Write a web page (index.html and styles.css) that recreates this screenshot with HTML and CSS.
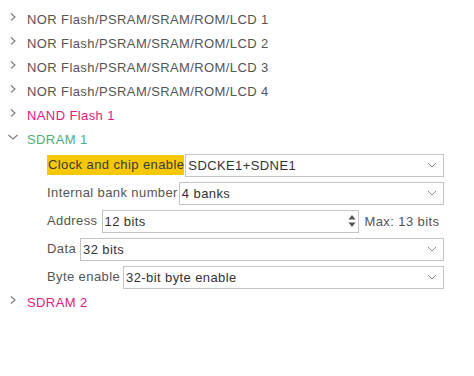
FILE: index.html
```html
<!DOCTYPE html>
<html>
<head>
<meta charset="utf-8">
<link rel="stylesheet" href="styles.css">
</head>
<body>
<div class="tree">
  <div class="node">
    <svg class="chev" width="10" height="10" viewBox="0 0 10 10"><path d="M3 1.5 L7 5 L3 8.5" fill="none" stroke="#7a7a7a" stroke-width="1.1"/></svg>
    <span class="name">NOR Flash/PSRAM/SRAM/ROM/LCD 1</span>
  </div>
  <div class="node">
    <svg class="chev" width="10" height="10" viewBox="0 0 10 10"><path d="M3 1.5 L7 5 L3 8.5" fill="none" stroke="#7a7a7a" stroke-width="1.1"/></svg>
    <span class="name">NOR Flash/PSRAM/SRAM/ROM/LCD 2</span>
  </div>
  <div class="node">
    <svg class="chev" width="10" height="10" viewBox="0 0 10 10"><path d="M3 1.5 L7 5 L3 8.5" fill="none" stroke="#7a7a7a" stroke-width="1.1"/></svg>
    <span class="name">NOR Flash/PSRAM/SRAM/ROM/LCD 3</span>
  </div>
  <div class="node">
    <svg class="chev" width="10" height="10" viewBox="0 0 10 10"><path d="M3 1.5 L7 5 L3 8.5" fill="none" stroke="#7a7a7a" stroke-width="1.1"/></svg>
    <span class="name">NOR Flash/PSRAM/SRAM/ROM/LCD 4</span>
  </div>
  <div class="node">
    <svg class="chev" width="10" height="10" viewBox="0 0 10 10"><path d="M3 1.5 L7 5 L3 8.5" fill="none" stroke="#7a7a7a" stroke-width="1.1"/></svg>
    <span class="name pink">NAND Flash 1</span>
  </div>
  <div class="node">
    <svg class="chev" width="10" height="10" viewBox="0 0 10 10"><path d="M0.5 3 L5 7 L9.5 3" fill="none" stroke="#7a7a7a" stroke-width="1.1"/></svg>
    <span class="name green">SDRAM 1</span>
  </div>
  <div class="form">
    <div class="row">
      <span class="label hl">Clock and chip enable</span>
      <div class="select"><span class="val">SDCKE1+SDNE1</span><svg class="dd" width="10" height="6" viewBox="0 0 10 6"><path d="M1 1 L5 5 L9 1" fill="none" stroke="#8a8a8a" stroke-width="1"/></svg></div>
    </div>
    <div class="row tight">
      <span class="label">Internal bank number</span>
      <div class="select"><span class="val">4 banks</span><svg class="dd" width="10" height="6" viewBox="0 0 10 6"><path d="M1 1 L5 5 L9 1" fill="none" stroke="#8a8a8a" stroke-width="1"/></svg></div>
    </div>
    <div class="row wide">
      <span class="label">Address</span>
      <div class="spin"><span class="val">12 bits</span><svg class="arrows" width="10" height="16" viewBox="0 0 10 16"><path d="M1.5 6.5 L5 2 L8.5 6.5 Z" fill="#555"/><path d="M1.5 9.5 L5 14 L8.5 9.5 Z" fill="#555"/></svg></div>
      <span class="max">Max: 13 bits</span>
    </div>
    <div class="row wide">
      <span class="label">Data</span>
      <div class="select"><span class="val">32 bits</span><svg class="dd" width="10" height="6" viewBox="0 0 10 6"><path d="M1 1 L5 5 L9 1" fill="none" stroke="#8a8a8a" stroke-width="1"/></svg></div>
    </div>
    <div class="row">
      <span class="label">Byte enable</span>
      <div class="select"><span class="val">32-bit byte enable</span><svg class="dd" width="10" height="6" viewBox="0 0 10 6"><path d="M1 1 L5 5 L9 1" fill="none" stroke="#8a8a8a" stroke-width="1"/></svg></div>
    </div>
  </div>
  <div class="node">
    <svg class="chev" width="10" height="10" viewBox="0 0 10 10"><path d="M3 1.5 L7 5 L3 8.5" fill="none" stroke="#7a7a7a" stroke-width="1.1"/></svg>
    <span class="name pink">SDRAM 2</span>
  </div>
</div>
</body>
</html>
```

FILE: styles.css
```css
html, body {
  margin: 0;
  padding: 0;
  background: #ffffff;
}
body {
  font-family: "Liberation Sans", Arial, sans-serif;
  font-size: 13px;
  letter-spacing: 0.4px;
  color: #555555;
}
.tree {
  padding-top: 8px;
  width: 474px;
}
.node {
  height: 24px;
  display: flex;
  align-items: center;
  padding-left: 8px;
}
.chev {
  width: 10px;
  height: 10px;
  margin-right: 9px;
  position: relative;
  top: -3px;
  flex: none;
}
.name {
  line-height: 16px;
}
.pink { color: #e0207f; }
.green { color: #4fae77; }
.form {
  margin-top: -1px;
  padding-left: 47px;
  width: 397px;
}
.row {
  height: 28px;
  display: flex;
  align-items: center;
  gap: 3px;
}
.row.tight { gap: 1px; }
.row.wide { gap: 4px; }
.label {
  line-height: 20px;
  white-space: nowrap;
}
.hl {
  background: #f7c808;
  color: #3a3a3a;
  padding-left: 1px;
  margin-right: -2px;
}
.select, .spin {
  flex: 1;
  height: 23px;
  box-sizing: border-box;
  border: 1px solid #c4c4c4;
  display: flex;
  align-items: center;
  padding-left: 2px;
  padding-right: 6px;
  color: #333333;
  background: #fff;
}
.val {
  flex: 1;
  white-space: nowrap;
}
.dd {
  flex: none;
}
.spin {
  flex: none;
  width: 257px;
  padding-right: 1px;
}
.arrows {
  flex: none;
}
.max {
  margin-left: 2px;
  white-space: nowrap;
}
```
